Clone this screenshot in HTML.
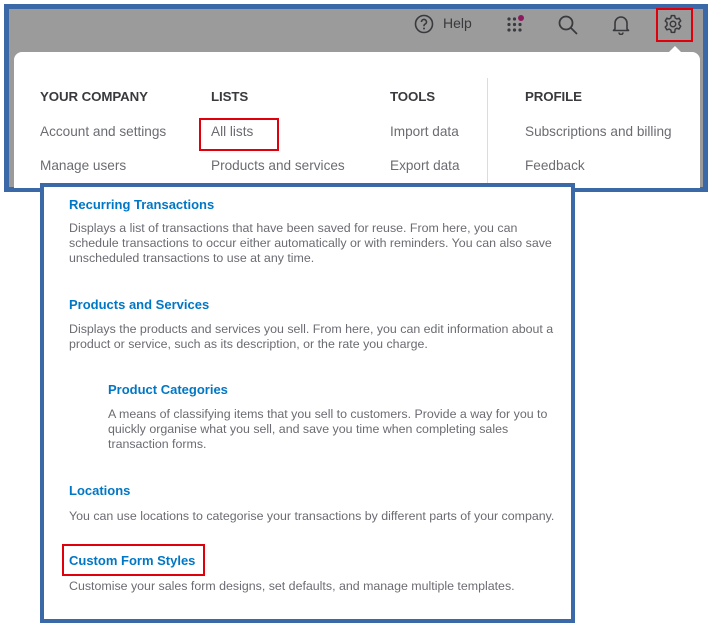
<!DOCTYPE html>
<html><head><style>
*{margin:0;padding:0;box-sizing:border-box}
body{width:712px;height:627px;background:#fff;position:relative;overflow:hidden;font-family:"Liberation Sans",sans-serif}
.a{position:absolute;white-space:nowrap}
.h{font-size:13.3px;color:#393a3d;font-weight:bold;letter-spacing:-0.1px}
.i{font-size:13.6px;color:#6b6c72}
.t{font-size:13px;color:#0077c5;font-weight:bold}
.d{font-size:12.4px;color:#6b6c72;line-height:15px}
</style></head><body>
<div class="a" style="left:4px;top:4px;width:704px;height:188px;background:#9b9b9b;border:5px solid #3b69a8"></div>
<div class="a" style="left:14px;top:52px;width:686px;height:136px;background:#fff;border-radius:8px 8px 0 0"></div>
<div class="a" style="left:669px;top:46px;width:0;height:0;border-left:6px solid transparent;border-right:6px solid transparent;border-bottom:6px solid #fff"></div>
<svg class="a" style="left:414px;top:14px" width="20" height="20" viewBox="0 0 20 20"><circle cx="10" cy="10" r="8.5" fill="none" stroke="#393a3d" stroke-width="1.6"/><path d="M7.5 8a2.5 2.5 0 1 1 3.3 2.3c-.6.3-.8.7-.8 1.3v.6" fill="none" stroke="#393a3d" stroke-width="1.6"/><circle cx="10" cy="14.5" r="1" fill="#393a3d"/></svg>
<div class="a" style="left:443px;top:15px;font-size:14px;color:#393a3d">Help</div>
<svg class="a" style="left:506px;top:14px" width="20" height="20" viewBox="0 0 20 20"><g fill="#393a3d"><circle cx="3" cy="5" r="1.6"/><circle cx="8.5" cy="5" r="1.6"/><circle cx="3" cy="10.5" r="1.6"/><circle cx="8.5" cy="10.5" r="1.6"/><circle cx="14" cy="10.5" r="1.6"/><circle cx="3" cy="16" r="1.6"/><circle cx="8.5" cy="16" r="1.6"/><circle cx="14" cy="16" r="1.6"/></g><circle cx="15" cy="4" r="3" fill="#8d1a5e"/></svg>
<svg class="a" style="left:557px;top:14px" width="22" height="22" viewBox="0 0 22 22"><circle cx="9" cy="9" r="6.5" fill="none" stroke="#393a3d" stroke-width="1.8"/><path d="M14 14l6 6" stroke="#393a3d" stroke-width="1.8"/></svg>
<svg class="a" style="left:611px;top:13px" width="20" height="22" viewBox="0 0 20 22"><path d="M4 16V10a6 6 0 0 1 12 0v6l1.5 1.5h-15z" fill="none" stroke="#393a3d" stroke-width="1.6" stroke-linejoin="round"/><path d="M8 19.5a2 2 0 0 0 4 0" fill="none" stroke="#393a3d" stroke-width="1.6"/></svg>
<svg class="a" style="left:663px;top:14px" width="20" height="20" viewBox="0 0 24 24"><path d="M10 2h4l.6 2.8 2 1.1 2.7-.9 2 3.4-2.1 1.9v2.4l2.1 1.9-2 3.4-2.7-.9-2 1.1L14 22h-4l-.6-2.8-2-1.1-2.7.9-2-3.4 2.1-1.9V10.3L2.7 8.4l2-3.4 2.7.9 2-1.1z" fill="none" stroke="#393a3d" stroke-width="1.8" stroke-linejoin="round"/><circle cx="12" cy="12" r="3.3" fill="none" stroke="#393a3d" stroke-width="1.8"/></svg>
<div class="a" style="left:656px;top:8px;width:37px;height:34px;border:2px solid #e0000b"></div>
<div class="a h" style="left:40px;top:89px">YOUR COMPANY</div>
<div class="a h" style="left:211px;top:89px">LISTS</div>
<div class="a h" style="left:390px;top:89px">TOOLS</div>
<div class="a h" style="left:525px;top:89px">PROFILE</div>
<div class="a" style="left:487px;top:78px;width:1px;height:110px;background:#dcdcdc"></div>
<div class="a i" style="left:40px;top:124px">Account and settings</div>
<div class="a i" style="left:211px;top:124px">All lists</div>
<div class="a i" style="left:390px;top:124px">Import data</div>
<div class="a i" style="left:525px;top:124px">Subscriptions and billing</div>
<div class="a i" style="left:40px;top:158px">Manage users</div>
<div class="a i" style="left:211px;top:158px">Products and services</div>
<div class="a i" style="left:390px;top:158px">Export data</div>
<div class="a i" style="left:525px;top:158px">Feedback</div>
<div class="a" style="left:199px;top:118px;width:80px;height:33px;border:2px solid #e0000b"></div>
<div class="a" style="left:40px;top:183px;width:535px;height:440px;background:#fff;border:4px solid #3b69a8"></div>
<div class="a t" style="left:69px;top:197px">Recurring Transactions</div>
<div class="a d" style="left:69px;top:221px">Displays a list of transactions that have been saved for reuse. From here, you can<br>schedule transactions to occur either automatically or with reminders. You can also save<br>unscheduled transactions to use at any time.</div>
<div class="a t" style="left:69px;top:297px">Products and Services</div>
<div class="a d" style="left:69px;top:322px">Displays the products and services you sell. From here, you can edit information about a<br>product or service, such as its description, or the rate you charge.</div>
<div class="a t" style="left:108px;top:382px">Product Categories</div>
<div class="a d" style="left:108px;top:407px">A means of classifying items that you sell to customers. Provide a way for you to<br>quickly organise what you sell, and save you time when completing sales<br>transaction forms.</div>
<div class="a t" style="left:69px;top:483px">Locations</div>
<div class="a d" style="left:69px;top:509px">You can use locations to categorise your transactions by different parts of your company.</div>
<div class="a t" style="left:69px;top:553px">Custom Form Styles</div>
<div class="a" style="left:62px;top:544px;width:143px;height:32px;border:2px solid #e0000b"></div>
<div class="a d" style="left:69px;top:579px">Customise your sales form designs, set defaults, and manage multiple templates.</div>
</body></html>
